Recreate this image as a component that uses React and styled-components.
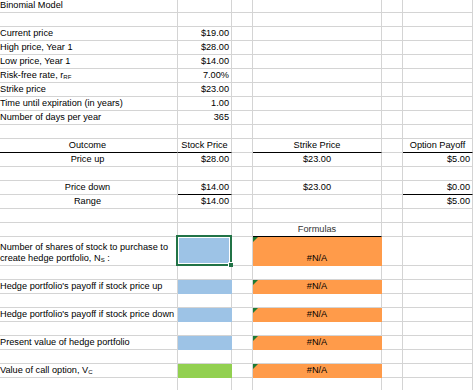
import React from 'react'
import styled, { createGlobalStyle, css } from 'styled-components'

const GlobalStyle = createGlobalStyle`
  html, body {
    margin: 0;
    padding: 0;
    background: #fff;
  }
  body {
    font-family: "Liberation Sans", Arial, sans-serif;
    overflow: hidden;
  }
`

const fills = {
  blue: '#9dc3e6',
  orange: '#ff9b4a',
  green: '#92d050',
}

const Sheet = styled.div`
  width: 473px;
  height: 390px;
  overflow: hidden;
`

const Grid = styled.div`
  margin-left: -2px;
  display: flex;
  flex-direction: column;
`

const Row = styled.div`
  display: grid;
  grid-template-columns: 180px 54px 21px 129px 21px 70px 40px;
  height: ${p => p.$h}px;
`

const Cell = styled.div`
  position: relative;
  box-sizing: border-box;
  display: flex;
  align-items: flex-end;
  justify-content: ${p => p.$align === 'r' ? 'flex-end' : p.$align === 'c' ? 'center' : 'flex-start'};
  text-align: ${p => p.$align === 'c' ? 'center' : 'left'};
  padding: 0 2px 1px 2px;
  border-right: 1px solid ${p => p.$fill ? fills[p.$fill] : '#d4d4d4'};
  border-bottom: 1px solid ${p => p.$bb ? '#000' : p.$fill ? fills[p.$fill] : '#d4d4d4'};
  background: ${p => p.$fill ? fills[p.$fill] : '#fff'};
  font-size: 9.2px;
  line-height: 11px;
  color: ${p => p.$muted ? '#333' : '#000'};
  white-space: nowrap;

  ${p => p.$tri && css`
    &::before {
      content: '';
      position: absolute;
      top: 0;
      left: 0;
      border-top: 5px solid #1d7a34;
      border-right: 5px solid transparent;
    }
  `}

  ${p => p.$sel && css`
    &::after {
      content: '';
      position: absolute;
      top: -2px;
      left: -2px;
      right: -1px;
      bottom: -1px;
      border: 2px solid #217346;
      box-shadow: inset 0 0 0 1px #fff;
    }
  `}
`

const Handle = styled.span`
  position: absolute;
  right: -2px;
  bottom: -2px;
  width: 4px;
  height: 4px;
  background: #217346;
  border: 1px solid #fff;
  border-right: none;
  border-bottom: none;
  z-index: 2;
`

const Sub = styled.span`
  font-size: 6px;
  vertical-align: -1px;
  line-height: 0;
`

const H = (t) => ({ t, a: 'c', bb: true })
const C = (t) => ({ t, a: 'c' })
const R = (t) => ({ t, a: 'r' })
const NA = { t: '#N/A', a: 'c', fill: 'orange', tri: true }

const rows = [
  { h: 13, cells: ['Binomial Model'] },
  { cells: [] },
  { cells: ['Current price', R('$19.00')] },
  { cells: ['High price, Year 1', R('$28.00')] },
  { cells: ['Low price, Year 1', R('$14.00')] },
  { cells: [<>Risk-free rate, r<Sub>RF</Sub></>, R('7.00%')] },
  { cells: ['Strike price', R('$23.00')] },
  { cells: ['Time until expiration (in years)', R('1.00')] },
  { cells: ['Number of days per year', R('365')] },
  { cells: [] },
  { cells: [H('Outcome'), H('Stock Price'), null, H('Strike Price'), null, H('Option Payoff')] },
  { cells: [C('Price up'), R('$28.00'), null, C('$23.00'), null, R('$5.00')] },
  { cells: [] },
  { cells: [C('Price down'), { t: '$14.00', a: 'r', bb: true }, null, C('$23.00'), null, { t: '$0.00', a: 'r', bb: true }] },
  { cells: [C('Range'), R('$14.00'), null, null, null, R('$5.00')] },
  { cells: [] },
  { cells: [null, null, null, { t: 'Formulas', a: 'c', bb: true, muted: true }] },
  {
    h: 29,
    cells: [
      <>Number of shares of stock to purchase to<br />create hedge portfolio, N<Sub>S</Sub> :</>,
      { fill: 'blue', sel: true },
      null,
      NA,
    ],
  },
  { cells: [] },
  { cells: ["Hedge portfolio's payoff if stock price up", { fill: 'blue' }, null, NA] },
  { cells: [] },
  { cells: ["Hedge portfolio's payoff if stock price down", { fill: 'blue' }, null, NA] },
  { cells: [] },
  { cells: ['Present value of hedge portfolio', { fill: 'blue' }, null, NA] },
  { cells: [] },
  { cells: [<>Value of call option, V<Sub>C</Sub></>, { fill: 'green' }, null, NA] },
  { cells: [] },
]

const norm = (c) => {
  if (c == null) return {}
  if (typeof c === 'string' || React.isValidElement(c)) return { t: c }
  return c
}

const App = () => {
  return (
    <Sheet>
      <GlobalStyle />
      <Grid>
        {rows.map((row, i) => (
          <Row key={i} $h={row.h || 14}>
            {Array.from({ length: 7 }).map((_, j) => {
              const c = norm(row.cells[j])
              return (
                <Cell key={j} $align={c.a} $fill={c.fill} $bb={c.bb} $tri={c.tri} $sel={c.sel} $muted={c.muted}>
                  {c.t ? <span>{c.t}</span> : null}
                  {c.sel && <Handle />}
                </Cell>
              )
            })}
          </Row>
        ))}
      </Grid>
    </Sheet>
  )
}

export default App
